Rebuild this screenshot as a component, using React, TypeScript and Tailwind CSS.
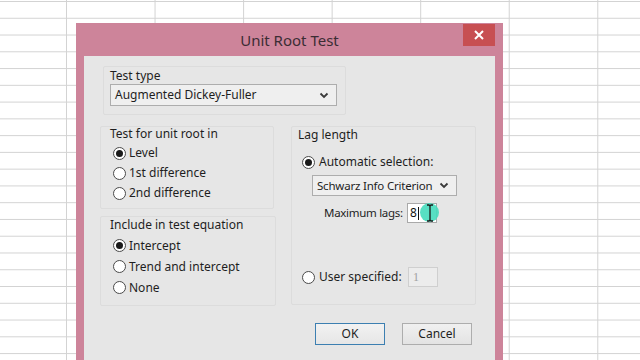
import React from 'react';

const font = { fontFamily: '"Noto Sans", "Open Sans", sans-serif' };

function Radio({ checked, label, className }: { checked?: boolean; label: string; className?: string }) {
  return (
    <div className={`flex items-center gap-[3px] ${className ?? ''}`}>
      <span className="w-[13px] h-[13px] rounded-full border border-[#4a4a4a] bg-white flex items-center justify-center shrink-0">
        {checked && <span className="w-[7px] h-[7px] rounded-full bg-[#1a1a1a]" />}
      </span>
      <span className="text-[12px] leading-[14px] text-[#1e1e1e] whitespace-nowrap">{label}</span>
    </div>
  );
}

function Chevron() {
  return (
    <svg width="10" height="7" viewBox="0 0 10 7" className="shrink-0">
      <polyline points="1.5,1.5 5,5 8.5,1.5" fill="none" stroke="#3a3a3a" strokeWidth="1.8" />
    </svg>
  );
}

function Select({ value, className, textClass }: { value: string; className: string; textClass?: string }) {
  return (
    <div className={`flex items-center justify-between pl-[4px] pr-[7px] border border-[#adadad] bg-[#efefef] ${className}`}>
      <span className={`leading-[14px] text-[#1e1e1e] whitespace-nowrap ${textClass ?? 'text-[12px]'}`}>{value}</span>
      <Chevron />
    </div>
  );
}

export default function App() {
  return (
    <div
      style={font}
      className="w-[640px] h-[360px] overflow-hidden bg-white bg-[linear-gradient(to_right,#d3d3d3_1px,transparent_1px),linear-gradient(to_bottom,#d3d3d3_1px,transparent_1px)] bg-size-[88.55px_16.78px] bg-position-[66px_1px] pt-[23px] pl-[76px]"
    >
      <div className="w-[427px] h-[337px] bg-[#cd849a] px-[8px] flex flex-col">
        {/* title bar */}
        <div className="relative h-[33px] shrink-0 flex items-center justify-center">
          <span className="text-[15px] leading-[18px] text-[#3b2d34]">Unit Root Test</span>
          <div className="absolute right-0 top-[1px] w-[32px] h-[22px] bg-[#c74f52] flex items-center justify-center">
            <svg width="10" height="10" viewBox="0 0 10 10">
              <path d="M1 1 L9 9 M9 1 L1 9" stroke="#fff" strokeWidth="2" />
            </svg>
          </div>
        </div>

        {/* client area */}
        <div className="flex-1 bg-[#e6e6e6] pl-[16px] pt-[10px]">
          {/* test type */}
          <div className="ml-[3px] w-[243px] h-[49px] border border-[#dcdcdc] rounded-[2px] px-[6px] pt-[2px]">
            <div className="text-[12px] leading-[14px] text-[#1e1e1e]">Test type</div>
            <Select value="Augmented Dickey-Fuller" className="mt-[1px] w-[227px] h-[22px]" />
          </div>

          <div className="flex mt-[11px]">
            {/* left column */}
            <div className="w-[174px] flex flex-col">
              <div className="h-[83px] border border-[#dcdcdc] rounded-[2px] pl-[9px]">
                <div className="text-[12px] leading-[14px] text-[#1e1e1e]">Test for unit root in</div>
                <div className="ml-[3px] mt-[2px]">
                  <Radio checked label="Level" className="h-[20px]" />
                  <Radio label="1st difference" className="h-[20px]" />
                  <Radio label="2nd difference" className="h-[20px]" />
                </div>
              </div>
              <div className="mt-[7px] w-[176px] h-[90px] border border-[#dcdcdc] rounded-[2px] pl-[9px] pt-[1px]">
                <div className="text-[12px] leading-[14px] text-[#1e1e1e]">Include in test equation</div>
                <div className="ml-[3px] mt-[3px]">
                  <Radio checked label="Intercept" className="h-[21px]" />
                  <Radio label="Trend and intercept" className="h-[21px]" />
                  <Radio label="None" className="h-[21px]" />
                </div>
              </div>
            </div>

            {/* lag length */}
            <div className="ml-[17px] w-[185px] h-[179px] border border-[#dcdcdc] rounded-[2px] pl-[6px] pt-[1px]">
              <div className="text-[12px] leading-[14px] text-[#1e1e1e]">Lag length</div>
              <Radio checked label="Automatic selection:" className="h-[20px] mt-[10px] ml-[4px] gap-[4px]" />
              <Select
                value="Schwarz Info Criterion"
                textClass="text-[11.5px] tracking-[-0.2px]"
                className="ml-[14px] mt-[3px] w-[145px] h-[21px]"
              />
              <div className="flex items-center h-[20px] mt-[7px] ml-[26px]">
                <span className="w-[83px] text-[11.5px] tracking-[-0.3px] leading-[14px] text-[#1e1e1e] whitespace-nowrap">Maximum lags:</span>
                <div className="relative w-[30px] h-[20px] bg-white border border-[#a9a9a9] pl-[2px] flex items-center">
                  <span className="text-[12px] leading-[14px] text-[#111]">8</span>
                  <span className="w-[1px] h-[13px] bg-[#111] ml-[1px]" />
                  {/* mouse cursor highlight */}
                  <span className="absolute left-[12px] top-[-1px] w-[19px] h-[19px] rounded-full bg-[#45dcbd]/90" />
                  <svg className="absolute left-[18px] top-[0px]" width="8" height="18" viewBox="0 0 8 18">
                    <path d="M1 1 H3 Q4 1 4 3 V15 Q4 17 3 17 H1 M7 1 H5 Q4 1 4 3 M4 15 Q4 17 5 17 H7" fill="none" stroke="#1a1a1a" strokeWidth="1.3" />
                  </svg>
                </div>
              </div>
              <div className="flex items-center h-[20px] mt-[44px] ml-[4px]">
                <Radio label="User specified:" className="w-[106px] gap-[4px]" />
                <div className="w-[30px] h-[20px] border border-[#cfcfcf] bg-[#ececec] pl-[4px] flex items-center">
                  <span className="text-[12px] leading-[14px] text-[#a0a0a0]" style={{ fontFamily: '"Liberation Serif", serif' }}>1</span>
                </div>
              </div>
            </div>
          </div>

          {/* buttons */}
          <div className="flex mt-[17px] ml-[215px] gap-[17px]">
            <button className="w-[70px] h-[22px] border border-[#3c7fb1] bg-[linear-gradient(#f2f2f2,#e6e6e6)] text-[12px] leading-[14px] text-[#1e1e1e]">
              OK
            </button>
            <button className="w-[70px] h-[22px] border border-[#adadad] bg-[linear-gradient(#f0f0f0,#e3e3e3)] text-[12px] leading-[14px] text-[#1e1e1e]">
              Cancel
            </button>
          </div>
        </div>
      </div>
    </div>
  );
}
